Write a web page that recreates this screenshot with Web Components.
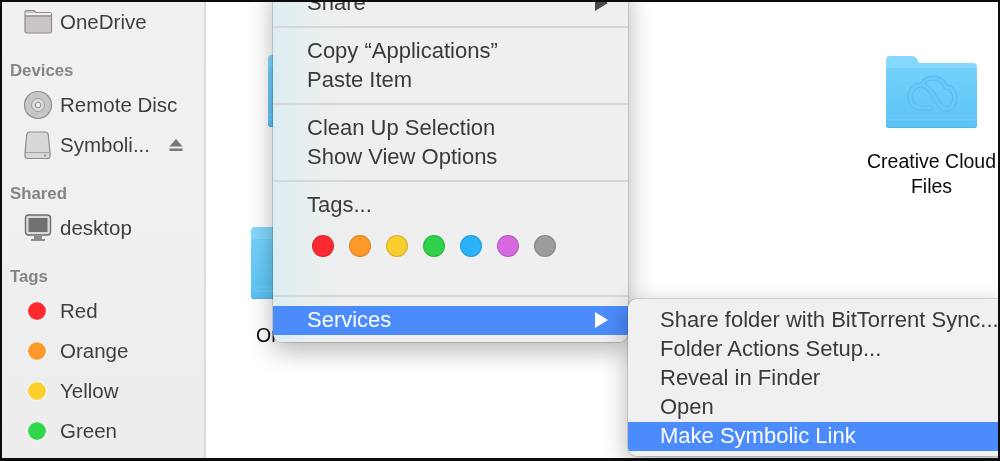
<!DOCTYPE html>
<html>
<head>
<meta charset="utf-8">
<title>Finder</title>
<style>
  html, body { margin: 0; padding: 0; background: #000; }
  body { width: 1000px; height: 461px; overflow: hidden; font-family: "Liberation Sans", Arial, sans-serif; }
</style>
</head>
<body>
<finder-window>
  <finder-sidebar slot="sidebar">
    <side-row label="OneDrive"><svg slot="icon" width="30" height="26" viewBox="0 0 30 26"><path d="M2 4V3Q2 1.500 3.500 1.500H11L13 3.500H27Q28.500 3.500 28.500 5V22.500Q28.500 24 27 24H3.500Q2 24 2 22.500Z" fill="#c8c5c4" stroke="#8e8c8b" stroke-width="1.200"/><path d="M2 7H28.500" stroke="#8e8c8b" stroke-width="1.200"/><path d="M2.600 5H28" stroke="#eee" stroke-width="2"/></svg></side-row>
    <side-head>Devices</side-head>
    <side-row label="Remote Disc"><svg slot="icon" width="30" height="30" viewBox="0 0 30 30"><circle cx="15" cy="15" r="13.500" fill="#c9c7c6" stroke="#908e8d" stroke-width="1.200"/><circle cx="15" cy="15" r="6.500" fill="#dedcdb" stroke="#a09e9d"/><circle cx="15" cy="15" r="2.800" fill="#efeded" stroke="#8e8c8b"/></svg></side-row>
    <side-row label="Symboli..." eject><svg slot="icon" width="30" height="30" viewBox="0 0 30 30"><path d="M7 2H22Q25 2 25.300 5L27 23V26Q27 28.500 24.500 28.500H4.500Q2 28.500 2 26V23L3.700 5Q4 2 7 2Z" fill="#dad8d7" stroke="#8e8c8b" stroke-width="1.200"/><path d="M2 22.500H27" stroke="#a5a3a2" stroke-width="1"/><circle cx="22" cy="25.500" r="1" fill="#8e8c8b"/></svg></side-row>
    <side-head>Shared</side-head>
    <side-row label="desktop"><svg slot="icon" width="30" height="30" viewBox="0 0 30 30"><rect x="2.500" y="2" width="25" height="20" rx="3" fill="#dcdad9" stroke="#6f6d6c" stroke-width="1.400"/><rect x="5.500" y="5" width="19" height="14" fill="#737170"/><path d="M11 23V26H19V23Z" fill="#8e8c8b"/><path d="M8 27H22" stroke="#77757a" stroke-width="1.600"/></svg></side-row>
    <side-head>Tags</side-head>
    <side-row label="Red"><tag-dot slot="icon" color="#fc2a2f"></tag-dot></side-row>
    <side-row label="Orange"><tag-dot slot="icon" color="#fd9a2b"></tag-dot></side-row>
    <side-row label="Yellow"><tag-dot slot="icon" color="#fdcf2e"></tag-dot></side-row>
    <side-row label="Green"><tag-dot slot="icon" color="#2fd84b"></tag-dot></side-row>
  </finder-sidebar>

  <folder-item style="left:62px;top:53px"></folder-item>
  <folder-item start style="left:45px;top:225px"><span>Or</span></folder-item>
  <folder-item cloud style="left:680px;top:54px"><span>Creative Cloud<br>Files</span></folder-item>

  <context-menu slot="over" style="left:271px;top:-18.500px;width:355px;height:358px">
    <menu-item arrow>Share</menu-item>
    <menu-sep></menu-sep>
    <menu-item>Copy “Applications”</menu-item>
    <menu-item>Paste Item</menu-item>
    <menu-sep></menu-sep>
    <menu-item>Clean Up Selection</menu-item>
    <menu-item>Show View Options</menu-item>
    <menu-sep></menu-sep>
    <menu-item>Tags...</menu-item>
    <tag-strip></tag-strip>
    <menu-sep></menu-sep>
    <menu-item arrow active>Services</menu-item>
  </context-menu>

  <context-menu slot="over" sub style="left:626px;top:297px;width:380px;height:157px">
    <menu-item>Share folder with BitTorrent Sync...</menu-item>
    <menu-item>Folder Actions Setup...</menu-item>
    <menu-item>Reveal in Finder</menu-item>
    <menu-item>Open</menu-item>
    <menu-item active>Make Symbolic Link</menu-item>
  </context-menu>
</finder-window>

<script>
function define(name, css, html, setup) {
  customElements.define(name, class extends HTMLElement {
    connectedCallback() {
      if (this.shadowRoot) return;
      this.attachShadow({ mode: 'open' });
      const body = typeof html === 'function' ? html(this) : html;
      this.shadowRoot.innerHTML = `<style>${css}</style>${body}`;
      if (setup) setup(this);
    }
  });
}

define('finder-window', `
  :host { display: block; position: relative; box-sizing: border-box; width: 1000px; height: 461px;
    border: solid #0c0c0c; border-width: 2px 2px 3px 2px; overflow: hidden; background: #fff; filter: blur(.35px); }
  .wrap { display: flex; height: 100%; }
  .main { flex: 1; position: relative; background: #fff; }
`, `<div class="wrap"><slot name="sidebar"></slot><div class="main"><slot></slot></div></div><slot name="over"></slot>`);

define('finder-sidebar', `
  :host { display: block; box-sizing: border-box; width: 204px; flex: none; height: 100%;
    background: linear-gradient(180deg, #f3f1f0 0, #f1efef 50%, #ededed 100%);
    border-right: 2px solid #dcdcdc; color: #3f3f42; }
`, `<slot></slot>`);

define('side-head', `
  :host { display: flex; align-items: center; box-sizing: border-box; height: 43px; padding: 15px 0 0 8px;
    font-size: 16.800px; font-weight: 700; color: #86848a; }
`, `<slot></slot>`);

define('side-row', `
  :host { display: flex; align-items: center; height: 40px; font-size: 20.500px; }
  .icon { width: 58px; padding-left: 21px; box-sizing: border-box; display: flex; align-items: center; flex: none; }
  .eject { margin-left: 19px; }
`, (el) => `<div class="icon"><slot name="icon"></slot></div><span>${el.getAttribute('label')}</span>
  ${el.hasAttribute('eject') ? '<svg class="eject" width="14" height="14" viewBox="0 0 14 14"><path d="M7 1L13.500 8.500H.5Z" fill="#77757a"/><rect x=".5" y="10.500" width="13" height="2.500" fill="#77757a"/></svg>' : ''}`);

define('tag-dot', `
  :host { display: block; width: 20px; height: 20px; margin: -1px 0 0 4px; border-radius: 50%; box-sizing: border-box;
    background: var(--c); border: 1px solid #fff8; background-clip: padding-box; }
`, '', (el) => el.style.setProperty('--c', el.getAttribute('color')));

define('folder-item', `
  :host { display: block; position: absolute; width: 91px; text-align: center; font-size: 19.500px; line-height: 25px; color: #0a0a0a; }
  .lab { margin-top: 21px; white-space: nowrap; display: flex; justify-content: center; }
  :host([start]) .lab { justify-content: flex-start; margin: 24px 0 0 5px; }
  svg { display: block; }
`, (el) => {
  const logo = 'M44 52H35C28 52 24 46 24 41C24 34 29 29 35 29C40 29 43 33 46 37C49 41 51 46 54 49C56 52 58 53 60 53C66 53 69 47 69 42C69 36 65 31 60 31C57 25 52 22 47 22C42 22 38 25 36 29';
  const cloud = el.hasAttribute('cloud') ? `
    <g fill="none" stroke-linecap="round">
      <path d="${logo}" stroke="#5cbdec" stroke-width="5.500"/>
      <path d="${logo}" stroke="#68caf9" stroke-width="3.200"/>
    </g>` : '';
  const lab = el.querySelector('span') ? '<div class="lab"><slot></slot></div>' : '';
  return `<svg width="91" height="72" viewBox="0 0 91 72">
    <defs><linearGradient id="f" x1="0" y1="0" x2="0" y2="1"><stop offset="0" stop-color="#74d1fc"/><stop offset="1" stop-color="#5cc3f6"/></linearGradient></defs>
    <path d="M0 4Q0 0 4 0H26Q29 0 31 3L33 7H87Q91 7 91 11V68Q91 72 87 72H4Q0 72 0 68Z" fill="#84d8fd"/>
    <path d="M0 14Q0 12 3 12H88Q91 12 91 14V68Q91 72 87 72H4Q0 72 0 68Z" fill="url(#f)"/>
    <path d="M0 60H91M0 64H91" stroke="#72cdf7" stroke-width="1"/>
    <path d="M0 69Q1 72 4 72H87Q90 72 91 69" fill="none" stroke="#45aee2" stroke-width="1"/>
    ${cloud}</svg>${lab}`;
});

define('context-menu', `
  :host { display: flex; flex-direction: column; position: absolute; box-sizing: border-box; padding-top: 5px;
    border-radius: 9px; color: #3a3a3c; overflow: hidden;
    background: linear-gradient(90deg, #dcedf1 0, #e8eff0 35px, #efefef 75px, #efefef 100%);
    box-shadow: 0 8px 26px rgba(0,0,0,.3), 0 0 0 1px rgba(0,0,0,.13); }
  :host([sub]) { background: #f0f0f0; padding-top: 6.500px; }
`, `<slot></slot>`);

define('menu-item', `
  :host { display: flex; align-items: center; justify-content: space-between; height: 29px; flex: none;
    padding: 0 0 0 34px; font-size: 22px; white-space: nowrap; }
  :host([active]) { background: #4b8bfb; color: #fff; }
  :host-context([sub]) { padding-left: 32px; }
  svg { margin-right: 20px; flex: none; }
`, (el) => `<slot></slot>${el.hasAttribute('arrow') ? `<svg width="13" height="16" viewBox="0 0 13 16"><path d="M0 0L13 8L0 16Z" fill="${el.hasAttribute('active') ? '#fff' : '#4a4a4c'}"/></svg>` : ''}`);

define('menu-sep', `
  :host { display: block; flex: none; height: 2px; margin: 8.500px 0; background: #d6d8d8; }
`, '');

define('tag-strip', `
  :host { display: flex; gap: 15px; padding: 15px 0 0 39px; height: 67px; box-sizing: border-box; flex: none; }
  i { display: block; width: 22px; height: 22px; border-radius: 50%; box-sizing: border-box; border: 1px solid #0002; }
`, ['#fc2a2f', '#fd9a2b', '#f9cd2e', '#2fd24a', '#2bb2fb', '#d668e0', '#9c9c9e'].map(c => `<i style="background:${c}"></i>`).join(''));
</script>
</body>
</html>
